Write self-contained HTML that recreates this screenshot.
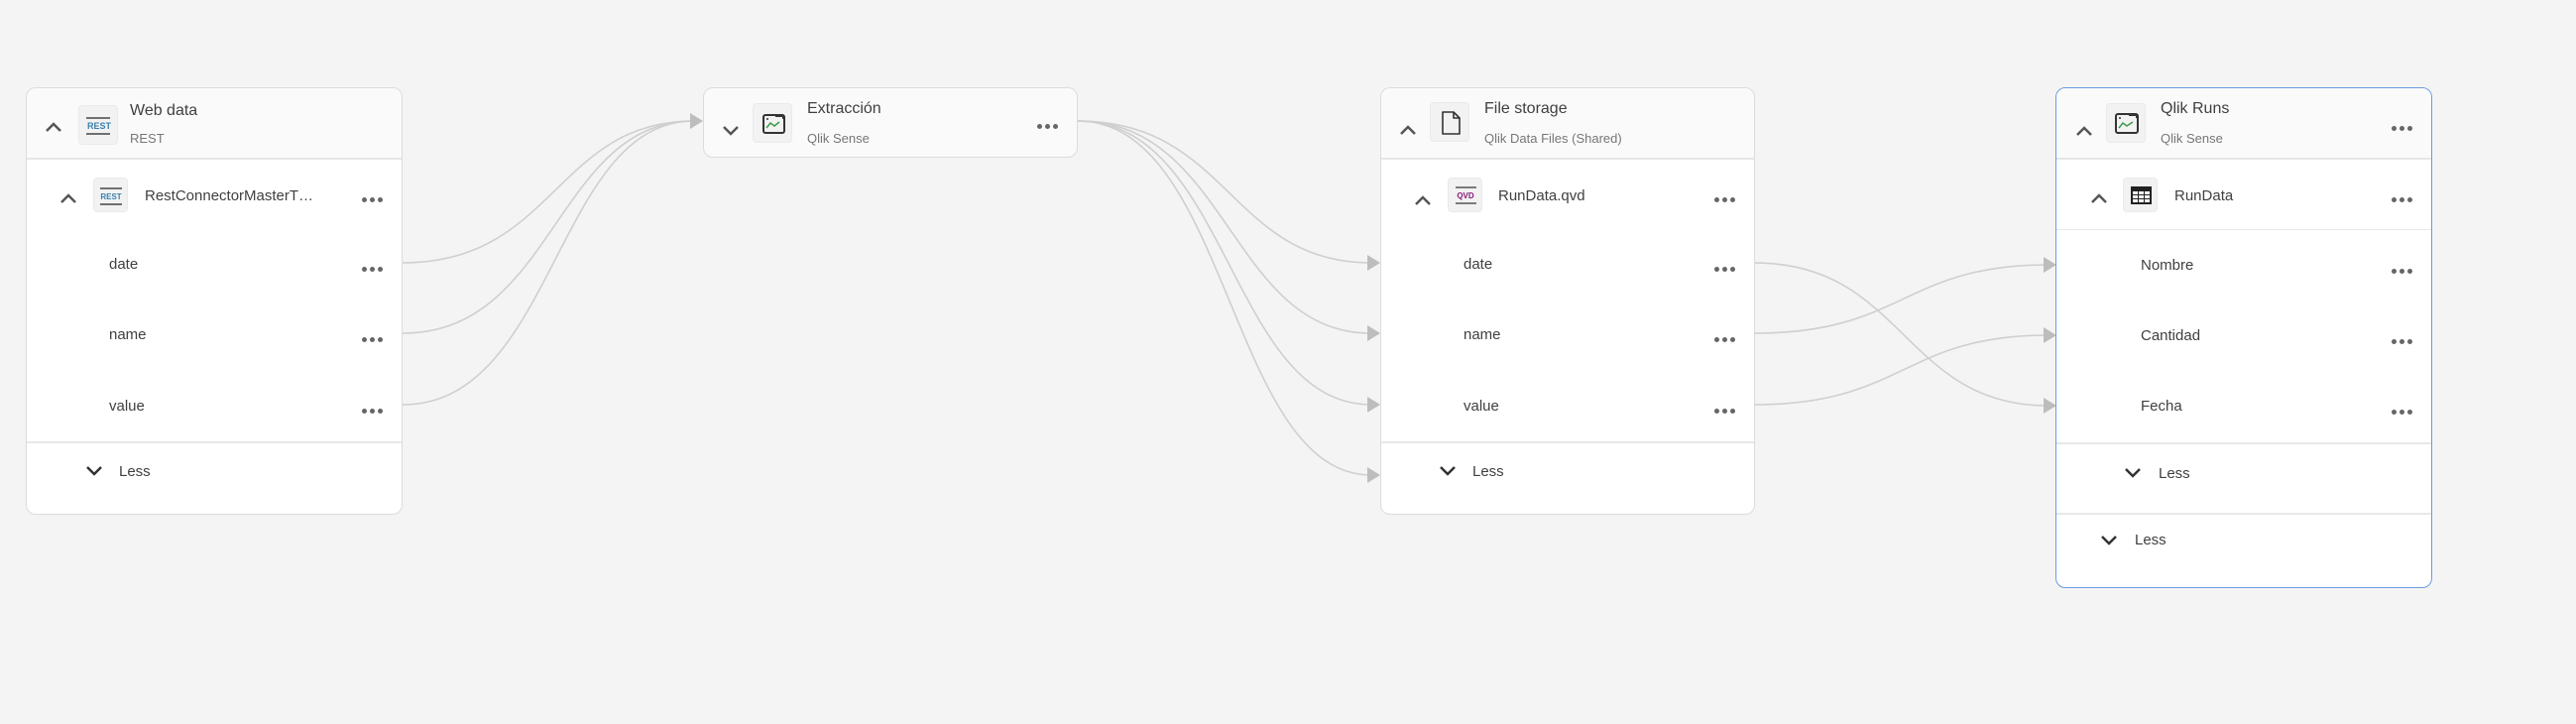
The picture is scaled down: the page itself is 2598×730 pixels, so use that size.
<!DOCTYPE html>
<html><head><meta charset="utf-8"><style>
*{box-sizing:border-box;margin:0;padding:0}
body{width:2598px;height:730px;background:#f4f4f4;font-family:"Liberation Sans",sans-serif;position:relative;overflow:hidden;color:#404040}
.card{position:absolute;background:#fff;border:1px solid #dcdcdc;border-radius:10px;overflow:hidden}
.hdr{position:absolute;left:0;right:0;top:0;height:72px;background:#fafafa;border-bottom:2px solid #e6e6e6}
.t{position:absolute;font-size:15px;color:#404040;white-space:nowrap}
.s{position:absolute;font-size:13px;color:#777;white-space:nowrap}
.ib{position:absolute;width:40px;height:40px;background:#f2f2f2;border-radius:4px;border:1px solid #eaeaea}
.ib.sm{width:35px;height:35px}
.sep{position:absolute;left:0;right:0;height:2px;background:#e8e8e8}
.dots{position:absolute;width:22px;height:6px}
.dots::before,.dots::after,.dots i{content:"";position:absolute;top:0;width:5px;height:5px;border-radius:50%;background:#666}
.dots::before{left:0}.dots i{left:8px}.dots::after{left:16px}
.ch{position:absolute;width:18px;height:12px}
.ch svg{display:block}
</style></head><body>
<svg width="2598" height="730" style="position:absolute;left:0;top:0" fill="none" stroke="#cfcfcf" stroke-width="1.6">
<path d="M406 265 C560 265 560 122 700 122"/>
<path d="M406 336 C560 336 560 122 700 122"/>
<path d="M406 408 C560 408 560 122 700 122"/>
<path d="M1087 122 C1240 122 1240 265 1383 265"/>
<path d="M1087 122 C1240 122 1240 336 1383 336"/>
<path d="M1087 122 C1240 122 1240 408 1383 408"/>
<path d="M1087 122 C1240 122 1240 479 1383 479"/>
<path d="M1770 265 C1920 265 1920 409 2065 409"/>
<path d="M1770 336 C1920 336 1920 267 2065 267"/>
<path d="M1770 408 C1920 408 1920 338 2065 338"/>
<g fill="#bdbdbd" stroke="none">
<path d="M696 114 L709 122 L696 130Z"/>
<path d="M1379 257 L1392 265 L1379 273Z"/>
<path d="M1379 328 L1392 336 L1379 344Z"/>
<path d="M1379 400 L1392 408 L1379 416Z"/>
<path d="M1379 471 L1392 479 L1379 487Z"/>
<path d="M2061 259 L2074 267 L2061 275Z"/>
<path d="M2061 330 L2074 338 L2061 346Z"/>
<path d="M2061 401 L2074 409 L2061 417Z"/>
</g></svg>

<!-- Card 1 -->
<div class="card" style="left:26px;top:88px;width:380px;height:431px">
<div class="hdr"></div>
<div class="ch" style="left:18px;top:33px"><svg width="18" height="12"><path d="M2 10 L9 3 L16 10" stroke="#555" stroke-width="2.5" fill="none"/></svg></div>
<div class="ib" style="left:52px;top:17px"><svg width="40" height="40"><path d="M7 12h24M7 28h24" stroke="#444" stroke-width="1.5"/><text x="20" y="23" font-size="9" font-weight="bold" fill="#3a7fb0" text-anchor="middle" font-family="Liberation Sans">REST</text></svg></div>
<div class="t" style="left:104px;top:14px;font-size:16px">Web data</div>
<div class="s" style="left:104px;top:43px">REST</div>
<div class="ch" style="left:33px;top:105px"><svg width="18" height="12"><path d="M2 10 L9 3 L16 10" stroke="#555" stroke-width="2.5" fill="none"/></svg></div>
<div class="ib sm" style="left:67px;top:90px"><svg width="35" height="35"><path d="M6 10h22M6 26h22" stroke="#444" stroke-width="1.5"/><text x="17" y="21" font-size="8" font-weight="bold" fill="#3a7fb0" text-anchor="middle" font-family="Liberation Sans">REST</text></svg></div>
<div class="t" style="left:119px;top:100px">RestConnectorMasterT…</div>
<div class="dots" style="left:338px;top:110px"><i></i></div>
<div class="t" style="left:83px;top:169px">date</div><div class="dots" style="left:338px;top:180px"><i></i></div>
<div class="t" style="left:83px;top:240px">name</div><div class="dots" style="left:338px;top:251px"><i></i></div>
<div class="t" style="left:83px;top:312px">value</div><div class="dots" style="left:338px;top:323px"><i></i></div>
<div class="sep" style="top:356px"></div>
<div class="ch" style="left:59px;top:379px"><svg width="18" height="12"><path d="M2 3 L9 10 L16 3" stroke="#333" stroke-width="2.5" fill="none"/></svg></div>
<div class="t" style="left:93px;top:378px">Less</div>
</div>

<!-- Card 2 -->
<div class="card" style="left:709px;top:88px;width:378px;height:71px;background:#fafafa">
<div class="ch" style="left:18px;top:36px"><svg width="18" height="12"><path d="M2 3 L9 10 L16 3" stroke="#555" stroke-width="2.5" fill="none"/></svg></div>
<div class="ib" style="left:49px;top:15px"><svg width="40" height="40"><rect x="10" y="11" width="21" height="18" rx="2" stroke="#333" stroke-width="2" fill="none"/><path d="M22 12h8v3" stroke="#333" stroke-width="2" fill="none"/><path d="M13 24 L17 19 L21 22 L26 18" stroke="#3a9a4a" stroke-width="1.5" fill="none"/><circle cx="14" cy="15" r="1" fill="#333"/></svg></div>
<div class="t" style="left:104px;top:12px;font-size:16px">Extracción</div>
<div class="s" style="left:104px;top:43px">Qlik Sense</div>
<div class="dots" style="left:336px;top:36px"><i></i></div>
</div>

<!-- Card 3 -->
<div class="card" style="left:1392px;top:88px;width:378px;height:431px">
<div class="hdr"></div>
<div class="ch" style="left:18px;top:36px"><svg width="18" height="12"><path d="M2 10 L9 3 L16 10" stroke="#555" stroke-width="2.5" fill="none"/></svg></div>
<div class="ib" style="left:49px;top:14px"><svg width="40" height="40"><path d="M12 9h11l6 6v16h-17z M23 9v6h6" stroke="#333" stroke-width="1.6" fill="none" stroke-linejoin="round"/></svg></div>
<div class="t" style="left:104px;top:12px;font-size:16px">File storage</div>
<div class="s" style="left:104px;top:43px">Qlik Data Files (Shared)</div>
<div class="ch" style="left:33px;top:107px"><svg width="18" height="12"><path d="M2 10 L9 3 L16 10" stroke="#555" stroke-width="2.5" fill="none"/></svg></div>
<div class="ib sm" style="left:67px;top:90px"><svg width="35" height="35"><path d="M7 9h21M7 25h21" stroke="#555" stroke-width="1.5"/><text x="17" y="20" font-size="8" font-weight="bold" fill="#8a1a7a" text-anchor="middle" font-family="Liberation Sans">QVD</text></svg></div>
<div class="t" style="left:118px;top:100px">RunData.qvd</div>
<div class="dots" style="left:336px;top:110px"><i></i></div>
<div class="t" style="left:83px;top:169px">date</div><div class="dots" style="left:336px;top:180px"><i></i></div>
<div class="t" style="left:83px;top:240px">name</div><div class="dots" style="left:336px;top:251px"><i></i></div>
<div class="t" style="left:83px;top:312px">value</div><div class="dots" style="left:336px;top:323px"><i></i></div>
<div class="sep" style="top:356px"></div>
<div class="ch" style="left:58px;top:379px"><svg width="18" height="12"><path d="M2 3 L9 10 L16 3" stroke="#333" stroke-width="2.5" fill="none"/></svg></div>
<div class="t" style="left:92px;top:378px">Less</div>
</div>

<!-- Card 4 -->
<div class="card" style="left:2073px;top:88px;width:380px;height:505px;border-color:#6a9be0">
<div class="hdr"></div>
<div class="ch" style="left:19px;top:37px"><svg width="18" height="12"><path d="M2 10 L9 3 L16 10" stroke="#555" stroke-width="2.5" fill="none"/></svg></div>
<div class="ib" style="left:50px;top:15px"><svg width="40" height="40"><rect x="9" y="10" width="22" height="19" rx="2" stroke="#333" stroke-width="2" fill="none"/><path d="M22 11h8v3" stroke="#333" stroke-width="2" fill="none"/><path d="M12 24 L16 19 L20 22 L26 18" stroke="#3a9a4a" stroke-width="1.5" fill="none"/><circle cx="13" cy="14" r="1" fill="#333"/></svg></div>
<div class="t" style="left:105px;top:12px;font-size:16px">Qlik Runs</div>
<div class="s" style="left:105px;top:43px">Qlik Sense</div>
<div class="dots" style="left:338px;top:38px"><i></i></div>
<div class="ch" style="left:34px;top:105px"><svg width="18" height="12"><path d="M2 10 L9 3 L16 10" stroke="#555" stroke-width="2.5" fill="none"/></svg></div>
<div class="ib sm" style="left:67px;top:90px"><svg width="35" height="35"><rect x="7" y="8" width="21" height="18" fill="#222"/><g fill="#fff"><rect x="9" y="13" width="5" height="3"/><rect x="15" y="13" width="5" height="3"/><rect x="21" y="13" width="5" height="3"/><rect x="9" y="17" width="5" height="3"/><rect x="15" y="17" width="5" height="3"/><rect x="21" y="17" width="5" height="3"/><rect x="9" y="21" width="5" height="3"/><rect x="15" y="21" width="5" height="3"/><rect x="21" y="21" width="5" height="3"/></g></svg></div>
<div class="t" style="left:119px;top:100px">RunData</div>
<div class="dots" style="left:338px;top:110px"><i></i></div>
<div class="sep" style="top:142px;height:1px"></div>
<div class="t" style="left:85px;top:170px">Nombre</div><div class="dots" style="left:338px;top:182px"><i></i></div>
<div class="t" style="left:85px;top:241px">Cantidad</div><div class="dots" style="left:338px;top:253px"><i></i></div>
<div class="t" style="left:85px;top:312px">Fecha</div><div class="dots" style="left:338px;top:324px"><i></i></div>
<div class="sep" style="top:357px"></div>
<div class="ch" style="left:68px;top:381px"><svg width="18" height="12"><path d="M2 3 L9 10 L16 3" stroke="#333" stroke-width="2.5" fill="none"/></svg></div>
<div class="t" style="left:103px;top:380px">Less</div>
<div class="sep" style="top:428px"></div>
<div class="ch" style="left:44px;top:449px"><svg width="18" height="12"><path d="M2 3 L9 10 L16 3" stroke="#333" stroke-width="2.5" fill="none"/></svg></div>
<div class="t" style="left:79px;top:447px">Less</div>
</div>
</body></html>
